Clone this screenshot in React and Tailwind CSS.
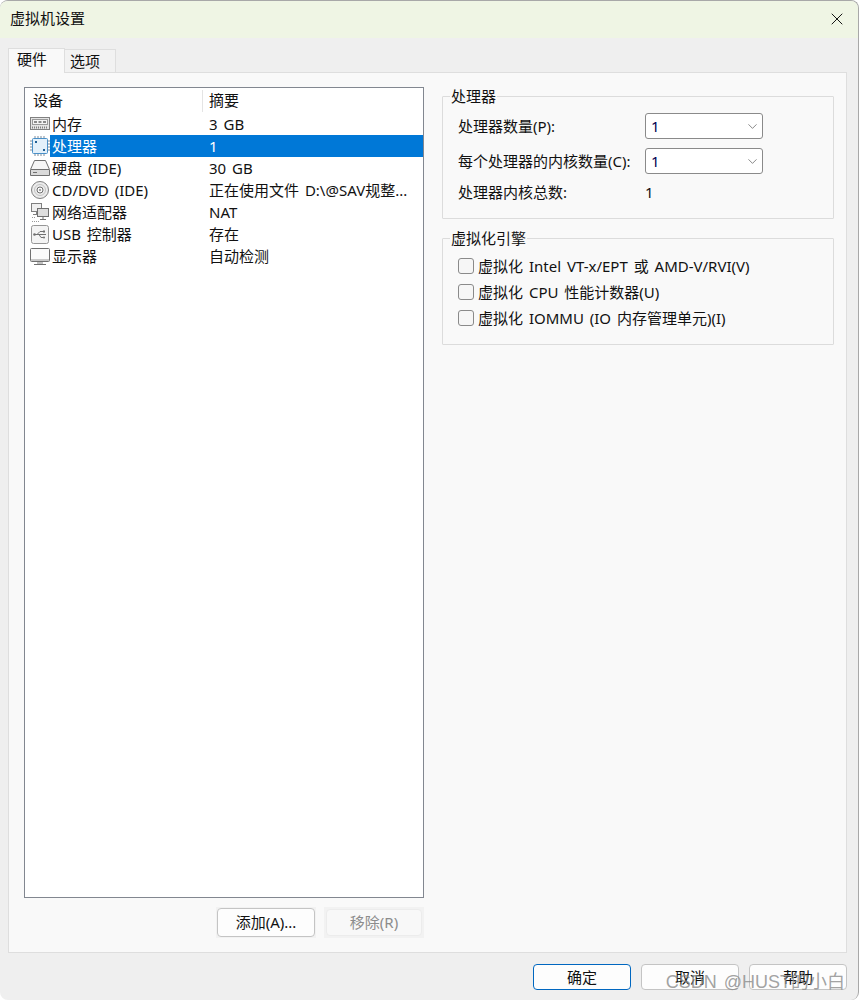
import { ChevronDown, X } from 'lucide-react';

function MemoryIcon() {
  return (
    <svg width="20" height="14" viewBox="0 0 20 14" fill="none">
      <rect x="0.5" y="0.5" width="19" height="12" fill="#e4e4e4" stroke="#808080" />
      <rect x="2.5" y="2.5" width="15" height="5" fill="#f4f4f4" stroke="#9a9a9a" />
      <rect x="4" y="4" width="3" height="2" fill="#8a8a8a" />
      <rect x="8.5" y="4" width="3" height="2" fill="#8a8a8a" />
      <rect x="13" y="4" width="3" height="2" fill="#8a8a8a" />
      <path d="M2 10.5h16" stroke="#808080" strokeWidth="2" strokeDasharray="1 1" />
    </svg>
  );
}

function CpuIcon() {
  return (
    <svg width="20" height="20" viewBox="0 0 20 20" fill="none">
      <path d="M5 0v3M8 0v3M11 0v3M14 0v3M5 17v3M8 17v3M11 17v3M14 17v3M0 5h3M0 8h3M0 11h3M0 14h3M17 5h3M17 8h3M17 11h3M17 14h3" stroke="#7d8b99" />
      <rect x="2.5" y="2.5" width="15" height="15" rx="1" fill="#e3f0fa" stroke="#4a90c8" />
      <rect x="5" y="5" width="2" height="2" fill="#1f5f94" />
      <rect x="13" y="13" width="2" height="2" fill="#1f5f94" />
    </svg>
  );
}

function DiskIcon() {
  return (
    <svg width="20" height="16" viewBox="0 0 20 16" fill="none">
      <path d="M4.5 0.5h11l4 9v6h-19v-6z" fill="#f6f6f6" stroke="#707070" />
      <path d="M1 9.5h18" stroke="#707070" />
      <rect x="1" y="10" width="18" height="5" fill="#dadada" />
      <path d="M3 12.5h4" stroke="#707070" />
    </svg>
  );
}

function CdIcon() {
  return (
    <svg width="18" height="18" viewBox="0 0 18 18" fill="none">
      <circle cx="9" cy="9" r="8.5" fill="#ececec" stroke="#7f7f7f" />
      <circle cx="9" cy="9" r="5.5" fill="none" stroke="#c4c4c4" />
      <circle cx="9" cy="9" r="3" fill="#fafafa" stroke="#707070" />
      <circle cx="9" cy="9" r="1" fill="#8a8a8a" />
    </svg>
  );
}

function NetworkIcon() {
  return (
    <svg width="18" height="19" viewBox="0 0 18 19" fill="none">
      <rect x="0.5" y="0.5" width="10" height="8" fill="#f0f0f0" stroke="#808080" />
      <path d="M5.5 9v2M2 11.5h5" stroke="#808080" />
      <rect x="6.5" y="5.5" width="11" height="8" fill="#dedede" stroke="#707070" />
      <path d="M12 14v2M9 16.5h6" stroke="#707070" />
      <path d="M1 14.5h4M1 18.5h8" stroke="#9a9a9a" strokeDasharray="1 1" />
    </svg>
  );
}

function UsbIcon() {
  return (
    <svg width="18" height="19" viewBox="0 0 18 19" fill="none">
      <rect x="0.5" y="0.5" width="17" height="18" rx="2" fill="#f4f4f4" stroke="#969696" />
      <path d="M3 9.5h12M6 9.5l3-3h3M8 9.5l2 3h2" stroke="#707070" />
      <circle cx="3.5" cy="9.5" r="1.3" fill="#707070" />
      <rect x="12" y="5.5" width="2" height="2" fill="#707070" />
      <circle cx="13" cy="12.5" r="1" fill="#707070" />
    </svg>
  );
}

function MonitorIcon() {
  return (
    <svg width="20" height="17" viewBox="0 0 20 17" fill="none">
      <rect x="0.5" y="0.5" width="19" height="13" rx="1" fill="#fafafa" stroke="#707070" />
      <rect x="1" y="11" width="18" height="2" fill="#c8c8c8" />
      <path d="M7 14h6v2H7z" fill="#c0c0c0" />
      <path d="M4 16.5h12" stroke="#707070" />
    </svg>
  );
}

const devices = [
  { name: '内存', summary: '3 GB', icon: <MemoryIcon /> },
  { name: '处理器', summary: '1', icon: <CpuIcon />, selected: true },
  { name: '硬盘 (IDE)', summary: '30 GB', icon: <DiskIcon /> },
  { name: 'CD/DVD (IDE)', summary: '正在使用文件 D:\\@SAV规整...', icon: <CdIcon /> },
  { name: '网络适配器', summary: 'NAT', icon: <NetworkIcon /> },
  { name: 'USB 控制器', summary: '存在', icon: <UsbIcon /> },
  { name: '显示器', summary: '自动检测', icon: <MonitorIcon /> },
];

function Select({ label }) {
  return (
    <div className="flex h-[26px] items-center">
      <span className="w-[187px] shrink-0 whitespace-nowrap">{label}</span>
      <div className="flex h-[26px] w-[118px] items-center justify-between rounded-[3px] border border-[#8a8a8a] bg-white pl-[5px] pr-[2px] text-[#000050]">
        <span>1</span>
        <ChevronDown size={15} strokeWidth={1} className="text-[#444]" />
      </div>
    </div>
  );
}

function Check({ label }) {
  return (
    <div className="flex h-[16px] items-center gap-[4px] whitespace-nowrap">
      <span className="h-[16px] w-[16px] shrink-0 rounded-[3px] border border-[#8a8a8a] bg-[#f6f6f6]" />
      <span>{label}</span>
    </div>
  );
}

function Group({ title, className, children }) {
  return (
    <fieldset className={`rounded-[1px] border border-[#dcdcdc] px-[15px] ${className}`}>
      <legend className="ml-[-8px] px-[1px] leading-[16px]">{title}</legend>
      {children}
    </fieldset>
  );
}

function Button({ children, disabled, primary }) {
  return (
    <button
      type="button"
      className={`h-full w-full rounded-[4px] border text-center ${
        primary
          ? 'border-[#0067c0] bg-[#fdfdfd]'
          : disabled
            ? 'border-[#ececec] bg-[#f8f8f8] text-[#8c8c8c]'
            : 'border-[#c4c4c4] bg-[#fdfdfd]'
      }`}
    >
      {children}
    </button>
  );
}

export default function App() {
  return (
    <div className="relative flex h-[1000px] w-[859px] flex-col overflow-hidden rounded-[8px] border-t border-r border-[#a8a8a8] bg-[#efefef] font-['Noto_Sans','Noto_Sans_CJK_SC',sans-serif] text-[15px] text-[#111] [word-spacing:2px]">
      {/* 标题栏 */}
      <div className="flex h-[37px] shrink-0 items-center justify-between bg-[#eff5e4] pb-[2px] pl-[10px] pr-[11px]">
        <span>虚拟机设置</span>
        <X size={20} strokeWidth={1.1} className="text-black" />
      </div>

      {/* 选项卡 */}
      <div className="flex h-[34px] shrink-0 items-end pl-[8px]">
        <div className="relative z-10 mb-[-1px] flex h-[25px] w-[57px] items-center border border-b-0 border-[#dedede] bg-[#f9f9f9] pb-[3px] pl-[8px]">
          硬件
        </div>
        <div className="flex h-[23px] w-[51px] items-center border border-l-0 border-b-0 border-[#dedede] bg-[#f2f2f2] pl-[5px]">
          选项
        </div>
      </div>

      {/* 主面板 */}
      <div className="ml-[8px] mr-[11px] flex h-[881px] shrink-0 gap-[18px] border border-[#dedede] bg-[#f9f9f9] pl-[15px] pt-[14px]">
        <div className="flex w-[400px] shrink-0 flex-col">
          <div className="h-[811px] border border-[#828790] bg-white">
            <div className="flex h-[25px] items-center">
              <span className="w-[177px] pl-[8px]">设备</span>
              <span className="flex h-[22px] items-center border-l border-[#e4e4e4] pl-[6px]">摘要</span>
            </div>
            {devices.map((d) => (
              <div key={d.name} className="flex h-[22px] items-center pl-[5px]">
                <span className="flex w-[20px] shrink-0 justify-center">{d.icon}</span>
                <div className={`flex h-[22px] flex-1 items-center whitespace-nowrap pl-[2px] ${d.selected ? 'bg-[#0078d7] text-white' : ''}`}>
                  <span className="w-[157px]">{d.name}</span>
                  <span>{d.summary}</span>
                </div>
              </div>
            ))}
          </div>
          <div className="mt-[9px] flex justify-end gap-[8px]">
            <div className="h-[31px] w-[100px] bg-[#f2f2f2] p-[1px]"><Button>添加(A)...</Button></div>
            <div className="h-[31px] w-[100px] bg-[#f2f2f2] p-[2px]"><Button disabled>移除(R)</Button></div>
          </div>
        </div>

        <div className="flex w-[392px] shrink-0 flex-col pt-[1px]">
          <Group title="处理器" className="h-[131px]">
            <div className="mt-[9px] flex flex-col gap-[9px]">
              <Select label="处理器数量(P):" />
              <Select label="每个处理器的内核数量(C):" />
            </div>
            <div className="mt-[6px] flex h-[24px] items-center">
              <span className="w-[187px]">处理器内核总数:</span>
              <span>1</span>
            </div>
          </Group>
          <Group title="虚拟化引擎" className="mt-[11px] h-[115px]">
            <div className="mt-[12px] flex flex-col gap-[10px]">
              <Check label="虚拟化 Intel VT-x/EPT 或 AMD-V/RVI(V)" />
              <Check label="虚拟化 CPU 性能计数器(U)" />
              <Check label="虚拟化 IOMMU (IO 内存管理单元)(I)" />
            </div>
          </Group>
        </div>
      </div>

      {/* 底部按钮 */}
      <div className="mt-[11px] flex h-[26px] shrink-0 justify-end gap-[10px] pr-[11px]">
        <div className="w-[98px]"><Button primary>确定</Button></div>
        <div className="w-[98px]"><Button>取消</Button></div>
        <div className="w-[98px]"><Button>帮助</Button></div>
      </div>

      {/* 水印 */}
      <span className="absolute bottom-[6px] right-[13px] font-['Liberation_Sans','Noto_Sans_CJK_SC',sans-serif] text-[18px] leading-[24px] text-[#8a8a8a]/80">
        CSDN @HUST的小白
      </span>
    </div>
  );
}
